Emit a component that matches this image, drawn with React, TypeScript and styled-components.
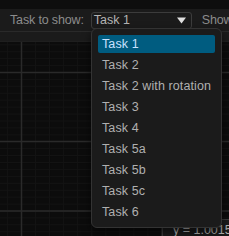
import React from "react";
import styled, { createGlobalStyle } from "styled-components";

const GlobalStyle = createGlobalStyle`
  html, body { margin: 0; padding: 0; background: #0c0c0c; overflow: hidden; }
  body { font-family: "Liberation Sans", Arial, sans-serif; }
`;

const Screen = styled.div`
  position: relative;
  width: 229px;
  height: 236px;
  overflow: hidden;
  display: flex;
  flex-direction: column;
  background: #1b1b1b;
  font-size: 12.5px;
`;

const TopStrip = styled.div`
  height: 9px;
  flex: none;
  background: #0e0e0e;
`;

const Toolbar = styled.div`
  height: 22px;
  flex: none;
  display: flex;
  align-items: center;
  padding-left: 10px;
  background: #1b1b1b;
  border-bottom: 1px solid #2a2a2a;
  white-space: nowrap;
`;

const Label = styled.span<{ $gapAfter?: number }>`
  color: #8c8c8c;
  margin-right: ${(p) => p.$gapAfter ?? 0}px;
  letter-spacing: -0.15px;
`;

const Combo = styled.div`
  box-sizing: border-box;
  width: 101px;
  height: 17px;
  margin-right: 10px;
  display: flex;
  align-items: center;
  justify-content: space-between;
  padding: 0 5px 0 2px;
  border: 1px solid #3c3c3c;
  border-radius: 3px;
  color: #b4b4b4;
  flex: none;
`;

const Central = styled.div`
  flex: 1;
  display: flex;
  flex-direction: column;
  padding-top: 9px;
  background: #1b1b1b;
`;

const Plot = styled.div`
  position: relative;
  flex: 1;
  background: #0c0c0c;
  border-top: 1px solid #1f1f1f;
`;

const GridSvg = styled.svg`
  display: block;
  width: 100%;
  height: 100%;
`;

const CoordLabel = styled.div`
  position: absolute;
  left: 162px;
  top: 177px;
  padding: 3px 8px 3px 10px;
  border: 1px solid #3c3c3c;
  border-radius: 6px;
  background: #1b1b1b;
  color: #b4b4b4;
  white-space: nowrap;
`;

const Popup = styled.div`
  position: absolute;
  left: 91px;
  top: 28px;
  width: 131px;
  box-sizing: border-box;
  padding: 6px;
  display: flex;
  flex-direction: column;
  gap: 3px;
  background: #1b1b1b;
  border: 1px solid #333333;
  border-radius: 6px;
  box-shadow: 0 4px 10px rgba(0, 0, 0, 0.6);
`;

const Item = styled.div<{ $selected?: boolean }>`
  height: 18px;
  display: flex;
  align-items: center;
  padding-left: 4px;
  border-radius: 2px;
  white-space: nowrap;
  letter-spacing: 0.1px;
  background: ${(p) => (p.$selected ? "#005c80" : "transparent")};
  color: ${(p) => (p.$selected ? "#c8e2ff" : "#b0b0b0")};
`;

const tasks = [
  "Task 1",
  "Task 2",
  "Task 2 with rotation",
  "Task 3",
  "Task 4",
  "Task 5a",
  "Task 5b",
  "Task 5c",
  "Task 6",
];

function Grid() {
  const minorX: number[] = [];
  for (let x = 21.5 - 140.5; x < 229; x += 14.05) minorX.push(x);
  const minorY: number[] = [];
  for (let y = 30.5 - 69.25; y < 200; y += 6.925) minorY.push(y);
  return (
    <GridSvg viewBox="0 0 229 195" preserveAspectRatio="none">
      {minorX.map((x, i) => (
        <line key={"mx" + i} x1={x} x2={x} y1={0} y2={195} stroke="#141414" strokeWidth={1} />
      ))}
      {minorY.map((y, i) => (
        <line key={"my" + i} x1={0} x2={229} y1={y} y2={y} stroke="#141414" strokeWidth={1} />
      ))}
      {[21.5, 162].map((x) => (
        <line key={"X" + x} x1={x} x2={x} y1={0} y2={195} stroke="#2a2a2a" strokeWidth={1.5} />
      ))}
      {[30.5, 99.5, 169].map((y) => (
        <line key={"Y" + y} x1={0} x2={229} y1={y} y2={y} stroke="#2a2a2a" strokeWidth={1.5} />
      ))}
    </GridSvg>
  );
}

export default function App() {
  return (
    <>
      <GlobalStyle />
      <Screen>
        <TopStrip />
        <Toolbar>
          <Label $gapAfter={7}>Task to show:</Label>
          <Combo>
            <span>Task 1</span>
            <svg width="9" height="7" viewBox="0 0 9 7">
              <polygon points="0,0.5 9,0.5 4.5,6.5" fill="#e0e0e0" />
            </svg>
          </Combo>
          <Label>Show</Label>
        </Toolbar>
        <Central>
          <Plot>
            <Grid />
            <CoordLabel>y = 1.0015</CoordLabel>
          </Plot>
        </Central>
        <Popup>
          {tasks.map((t, i) => (
            <Item key={t} $selected={i === 0}>
              {t}
            </Item>
          ))}
        </Popup>
      </Screen>
    </>
  );
}
